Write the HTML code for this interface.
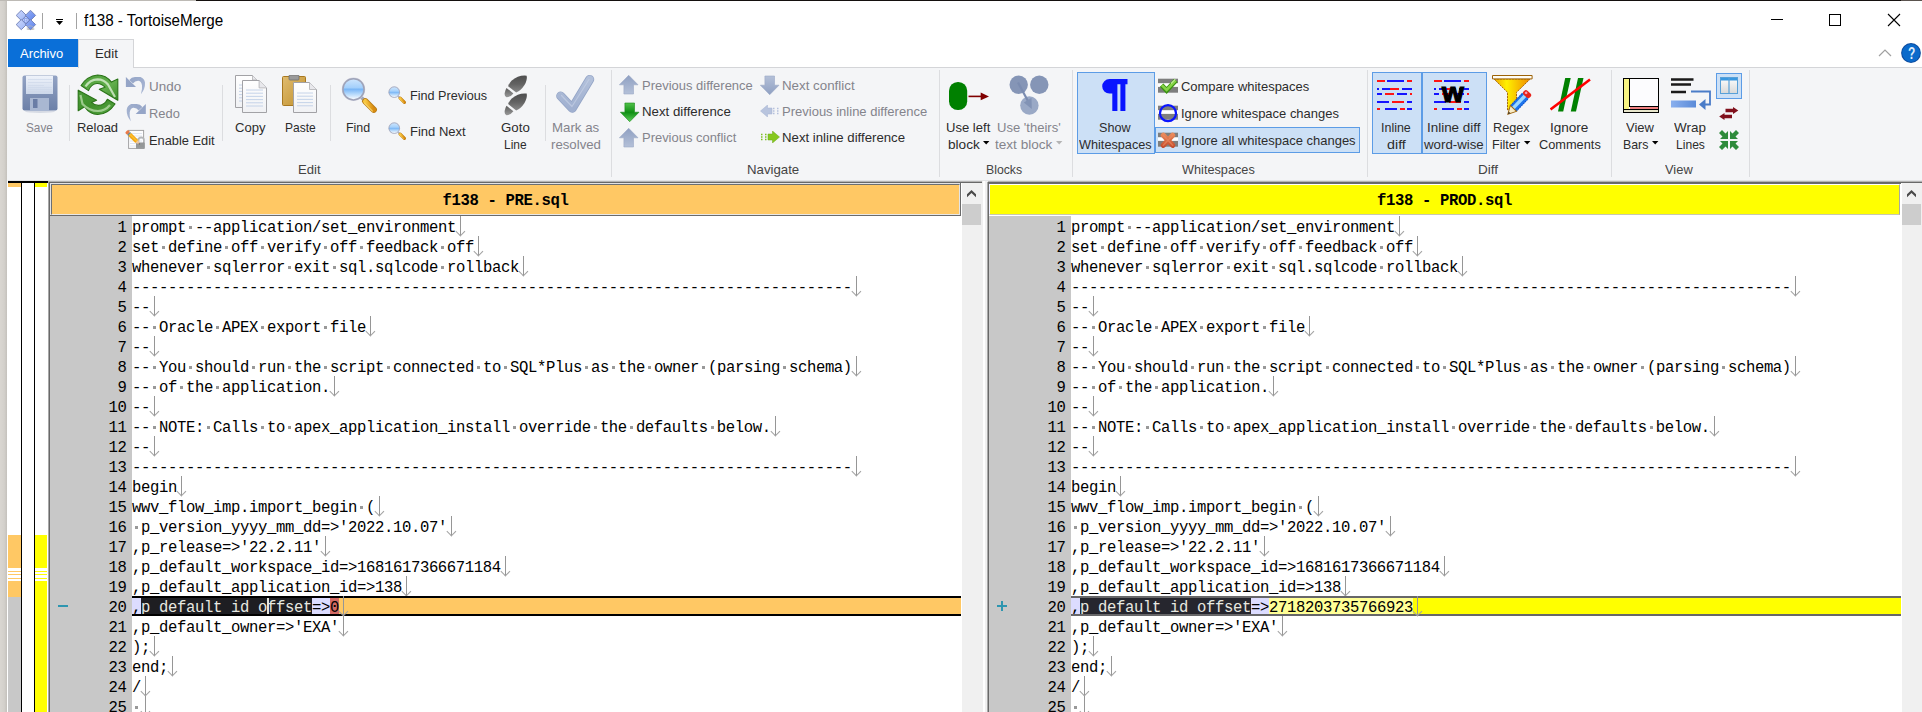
<!DOCTYPE html>
<html lang="es"><head><meta charset="utf-8"><title>f138 - TortoiseMerge</title>
<style>
html,body{margin:0;padding:0;overflow:hidden}
body{width:1922px;height:712px;overflow:hidden;position:relative;background:#fff;font-family:"Liberation Sans",sans-serif}
div,span,i,b,svg{position:absolute;box-sizing:border-box}
.t{white-space:nowrap;line-height:1;transform-origin:0 0;font-family:"Liberation Sans",sans-serif}

.mono{font-family:"Liberation Mono","DejaVu Sans Mono",monospace;font-size:15.6px;letter-spacing:-0.3615px;line-height:20px;white-space:pre;color:#000}
.row{height:20px;left:0;right:0}
.num{width:76.6px;left:0;text-align:right;height:20px;top:2px}
.code{left:82px;height:20px;top:2px}
.code span,.code i,.code b{position:static}
.code .s{background:linear-gradient(#999,#999) 3px 10px/3px 3px no-repeat}
.code i.e{position:relative;display:inline-block;width:9px;height:20px;vertical-align:top;top:-2px}
i.e:before{content:"";position:absolute;left:4px;top:0;width:1px;height:20px;background:#969696}
i.e:after{content:"";position:absolute;left:1.1px;top:12.2px;width:6.8px;height:6.8px;border:solid #a2a2a2;border-width:0 1px 1px 0;transform:rotate(45deg);box-sizing:border-box}
.hdr{font-weight:bold;text-align:center;line-height:32px;height:31px}

.lav{background:#dcdcff}
.sel{background:#1e1e22;color:#e8e8e0}
.sel2{background:#26262e;color:#e8e8e0}
.red{background:#d26a64}
.ly{background:#ffff96}
.row .code b{font-weight:normal;position:relative;top:1.5px}
.row .code span{display:inline-block;height:20px;vertical-align:top;position:relative;top:-2px;line-height:24px}
</style></head>
<body>
<div style="left:0;top:0;width:7px;height:712px;background:linear-gradient(90deg,#d9d6d1,#d3d0cb 60%,#c4c1bc)"></div>
<div style="left:0;top:0;width:1922px;height:1px;background:linear-gradient(90deg,#bdbab5 195.5px,#14100e 196.5px,#14100e 1900.5px,#5a534e 1901.5px)"></div>
<div id="title" style="left:8px;top:2px;width:1914px;height:37px;background:#fff">
<svg style="left:8px;top:8px" width="21" height="21"><linearGradient id="gA1" x1="0" y1="0" x2="1" y2="1"><stop offset="0" stop-color="#ccd8fc"/><stop offset="1" stop-color="#9cb4f6"/></linearGradient><linearGradient id="gA2" x1="0" y1="0" x2="1" y2="1"><stop offset="0" stop-color="#98b0f6"/><stop offset="1" stop-color="#5c82ea"/></linearGradient><ellipse cx="14.500" cy="19" rx="4" ry="1" fill="#9a9a9a" opacity=".6"/><path d="M9.9 5.4l4.6 4.6l-4.6 4.6l-4.6 -4.6z" fill="#8ea6ee" stroke="#6f7fb4" stroke-width=".9" stroke-linejoin="round"/><path d="M5.3 0.3000000000000007l5.1 5.1l-5.1 5.1l-5.1 -5.1z" fill="url(#gA1)" stroke="#6f7fb4" stroke-width=".9" stroke-linejoin="round"/><path d="M14.5 0.3000000000000007l5.1 5.1l-5.1 5.1l-5.1 -5.1z" fill="url(#gA2)" stroke="#6f7fb4" stroke-width=".9" stroke-linejoin="round"/><path d="M5.3 9.5l5.1 5.1l-5.1 5.1l-5.1 -5.1z" fill="url(#gA1)" stroke="#6f7fb4" stroke-width=".9" stroke-linejoin="round"/><path d="M14.5 9.5l5.1 5.1l-5.1 5.1l-5.1 -5.1z" fill="url(#gA2)" stroke="#6f7fb4" stroke-width=".9" stroke-linejoin="round"/><path d="M9.900 7v6M6.900 10h6" stroke="#dfe6fb" stroke-width="1" stroke-dasharray="1 1"/><path d="M11 17.500c1.500-2.200 5-2.200 6.500 0" stroke="#a8b0c4" stroke-width="1.200" fill="none" opacity=".8"/></svg><div style="left:34px;top:11px;width:1px;height:16px;background:#a3a3a3"></div><div style="left:68px;top:11px;width:1px;height:16px;background:#a3a3a3"></div><div style="left:48px;top:17px;width:7px;height:1px;background:#000"></div><svg style="left:48px;top:19px" width="7" height="4"><path d="M0 0h7L3.5 4z" fill="#000"/></svg><span class="t" style="left:75.80px;top:11.06px;font-size:16px;color:#000;transform:scaleX(0.9503);">f138 - TortoiseMerge</span><svg style="left:1762px;top:8px" width="14" height="14" shape-rendering="crispEdges"><path d="M1 9.5h12" stroke="#000" fill="none"/></svg><svg style="left:1820px;top:12px" width="14" height="14" shape-rendering="crispEdges"><rect x="1.5" y="0.5" width="11" height="11" stroke="#000" fill="none"/></svg><svg style="left:1879px;top:11px" width="14" height="14"><path d="M1 1l12 12M13 1L1 13" stroke="#000" stroke-width="1.1" fill="none"/></svg></div>
<div id="tabs" style="left:8px;top:39px;width:1914px;height:29px;background:#fff">
<div style="left:0;top:28px;width:70px;height:1px;background:#f4f5f7"></div><div style="left:0;top:0;width:70px;height:28px;background:#0a6fd8"></div><div style="left:70px;top:0;width:56px;height:29px;background:#f4f5f7;border:1px solid #d4d5d8;border-bottom:0"></div><div style="left:125px;top:28px;width:1789px;height:1px;background:#d4d5d8"></div><span class="t" style="left:12.40px;top:7.91px;font-size:13.1px;color:#fff;transform:scaleX(0.9888);">Archivo</span><span class="t" style="left:86.55px;top:7.91px;font-size:13.1px;color:#2c2c2c;transform:scaleX(1.0112);">Edit</span><svg style="left:1868.5px;top:8.5px" width="16" height="10"><path d="M2 8l6-6 6 6" stroke="#a0a0a0" stroke-width="1.2" fill="none"/></svg><svg style="left:1891.1px;top:2px" width="24" height="24"><circle cx="12" cy="12" r="9.9" fill="#0b4a9e"/><circle cx="12" cy="12" r="8.9" fill="#0a6acb"/></svg><span class="t" style="left:1899.70px;top:7.46px;font-size:16px;color:#dcebfa;transform:scaleX(0.7480);font-weight:bold;">?</span></div>
<div style="left:7px;top:68px;width:1px;height:113px;background:#f4f5f7"></div><div id="ribbon" style="left:8px;top:68px;width:1914px;height:114px;background:#f4f5f7">
<svg width="0" height="0" style="left:0;top:0"><defs><linearGradient id="gDis" x1="0" y1="0" x2="0" y2="1"><stop offset="0" stop-color="#8fa0c2"/><stop offset="1" stop-color="#b4c0d8"/></linearGradient><linearGradient id="gDisH" x1="0" y1="0" x2="1" y2="0"><stop offset="0" stop-color="#8fa0c2"/><stop offset="1" stop-color="#c3cde0"/></linearGradient><linearGradient id="gGrn" x1="0" y1="0" x2="0" y2="1"><stop offset="0" stop-color="#5ed05a"/><stop offset=".5" stop-color="#0f8f14"/><stop offset="1" stop-color="#52c24a"/></linearGradient><linearGradient id="gFlop" x1="0" y1="0" x2="0" y2="1"><stop offset="0" stop-color="#93a3c4"/><stop offset="1" stop-color="#6c80a8"/></linearGradient><linearGradient id="gFlopL" x1="0" y1="0" x2="0" y2="1"><stop offset="0" stop-color="#eef2fa"/><stop offset="1" stop-color="#ccd7ea"/></linearGradient><linearGradient id="gLens" x1="0" y1="0" x2="0" y2="1"><stop offset="0" stop-color="#cfe6fd"/><stop offset=".42" stop-color="#a4d0fb"/><stop offset=".5" stop-color="#7ab6f6"/><stop offset=".72" stop-color="#b4d8fb"/><stop offset="1" stop-color="#ffffff"/></linearGradient><linearGradient id="gHandle" x1="0" y1="0" x2="1" y2="0"><stop offset="0" stop-color="#f8c840"/><stop offset="1" stop-color="#d88a10"/></linearGradient><linearGradient id="gClip" x1="0" y1="0" x2="1" y2="1"><stop offset="0" stop-color="#e0bc70"/><stop offset="1" stop-color="#c0902c"/></linearGradient><linearGradient id="gPaper" x1="0" y1="0" x2="0" y2="1"><stop offset="0" stop-color="#ffffff"/><stop offset="1" stop-color="#f0f1f4"/></linearGradient><linearGradient id="gFoot" x1="0" y1="0" x2="0" y2="1"><stop offset="0" stop-color="#4e4e4e"/><stop offset=".5" stop-color="#626262"/><stop offset="1" stop-color="#8a8a8a"/></linearGradient><linearGradient id="gFoot2" x1="0" y1="0" x2="0" y2="1"><stop offset="0" stop-color="#5c5c5c"/><stop offset="1" stop-color="#9a9a9a"/></linearGradient><linearGradient id="gFun" x1="0" y1="0" x2="1" y2="0"><stop offset="0" stop-color="#f0a800"/><stop offset=".35" stop-color="#fff000"/><stop offset="1" stop-color="#f08c00"/></linearGradient><linearGradient id="gRel1" x1="0" y1="0" x2="1" y2="1"><stop offset="0" stop-color="#4c9e38"/><stop offset=".6" stop-color="#62ae4c"/><stop offset="1" stop-color="#3a8a28"/></linearGradient><linearGradient id="gRel2" x1="0" y1="0" x2="1" y2="1"><stop offset="0" stop-color="#4a9c36"/><stop offset=".5" stop-color="#3f8f2c"/><stop offset="1" stop-color="#57a642"/></linearGradient><linearGradient id="gUndo" x1="0" y1="0" x2="1" y2="1"><stop offset="0" stop-color="#95a5c7"/><stop offset="1" stop-color="#a9b7d4"/></linearGradient><linearGradient id="gX" gradientUnits="userSpaceOnUse" x1="0" y1="3" x2="0" y2="16"><stop offset="0" stop-color="#ea8a5c"/><stop offset="1" stop-color="#c44a2a"/></linearGradient><linearGradient id="gRel" x1="0" y1="0" x2="1" y2="1"><stop offset="0" stop-color="#2e8a1e"/><stop offset=".5" stop-color="#9fd88a"/><stop offset="1" stop-color="#2e8a1e"/></linearGradient><linearGradient id="gBar" x1="0" y1="0" x2="1" y2="0"><stop offset="0" stop-color="#8ab0ee"/><stop offset="1" stop-color="#5a8ad8"/></linearGradient><linearGradient id="gWin" x1="0" y1="0" x2="0" y2="1"><stop offset="0" stop-color="#ffffff"/><stop offset="1" stop-color="#d8d8d8"/></linearGradient><linearGradient id="gChk" x1="0" y1="0" x2="0" y2="1"><stop offset="0" stop-color="#b2c0da"/><stop offset="1" stop-color="#a0b0d0"/></linearGradient></defs></svg><div style="left:1069px;top:4px;width:78px;height:82px;background:#cce0f6;border:1px solid #5c9ce6;"></div><div style="left:1147px;top:59px;width:205px;height:26px;background:#cce0f6;border:1px solid #5c9ce6;"></div><div style="left:1364px;top:4px;width:50px;height:82px;background:#cce0f6;border:1px solid #5c9ce6;"></div><div style="left:1414px;top:4px;width:65px;height:82px;background:#cce0f6;border:1px solid #5c9ce6;"></div><div style="left:1708px;top:5px;width:26px;height:26px;background:#cce0f6;border:1px solid #5c9ce6;"></div><div style="left:61px;top:17px;width:1px;height:56px;background:#dcdde0"></div><div style="left:214px;top:17px;width:1px;height:56px;background:#dcdde0"></div><div style="left:322px;top:17px;width:1px;height:56px;background:#dcdde0"></div><div style="left:537px;top:17px;width:1px;height:56px;background:#dcdde0"></div><div style="left:603px;top:2px;width:1px;height:107px;background:#dcdde0"></div><div style="left:931px;top:2px;width:1px;height:107px;background:#dcdde0"></div><div style="left:1064px;top:2px;width:1px;height:107px;background:#dcdde0"></div><div style="left:1359px;top:2px;width:1px;height:107px;background:#dcdde0"></div><div style="left:1603px;top:2px;width:1px;height:107px;background:#dcdde0"></div><div style="left:1741px;top:2px;width:1px;height:107px;background:#dcdde0"></div><svg style="left:14px;top:7px" width="36" height="38"><ellipse cx="18" cy="36.5" rx="15" ry="1.5" fill="#c9cfdb" opacity=".7"/><rect x="0.5" y="0.5" width="35" height="35" rx="2" fill="url(#gFlop)"/><rect x="4" y="1" width="27" height="18" fill="url(#gFlopL)"/><path d="M6 4.500h24M6 7.500h24M6 10.500h16M6 12.500h24M6 14.500h24M6 17h24" stroke="#cfd8ea" stroke-width=".7"/><rect x="8" y="23" width="19" height="13" fill="#a9b7d2"/><rect x="11" y="24" width="4.5" height="9" fill="#6a7da6"/></svg><span class="t" style="left:17.60px;top:52.91px;font-size:13.1px;color:#84848c;transform:scaleX(0.9006);">Save</span><svg style="left:66px;top:3px" width="48" height="48"><path d="M7.100 14.500Q13 5 23.600 4Q32 4 37.400 11.100L43.800 8V29.300L25.300 18.200L31 16.200Q27.500 12.300 22.900 12.500Q17 13 14.500 19.600Z" fill="url(#gRel1)" stroke="#2a7418" stroke-width="1.100" stroke-linejoin="round"/><path d="M11.500 15.500Q16 8.500 23.500 8.300Q30 8.300 34 13.500L41 26" fill="none" stroke="#e4f4dc" stroke-width="2.200" opacity=".75"/><path d="M4.200 19.200V39.800L10.500 35.700Q16 43.500 23.600 43.500Q34 43.500 41 33L33.400 28.300Q30.500 34.400 24.300 34.400Q20.500 34.400 17.500 31.400L22.600 29.300Z" fill="url(#gRel2)" stroke="#2a7418" stroke-width="1.100" stroke-linejoin="round"/><path d="M6.500 24L8.500 33Q15 40 24 40Q31 40 36 34" fill="none" stroke="#d8f0cc" stroke-width="2.200" opacity=".6"/></svg><span class="t" style="left:68.60px;top:52.91px;font-size:13.1px;color:#2c2c2c;transform:scaleX(0.9897);">Reload</span><svg style="left:114px;top:4px" width="30" height="28"><path d="M3.900 4.900V14.900H14Z" fill="#95a5c7"/><path d="M7.300 8.100Q9.500 5.300 13 5.100H18.500Q22.500 6.500 23 10.800Q23.300 17 18.900 22.200Q20.500 17 20 13.500Q19.500 9.500 16.500 8.800Q13 8.600 11 11.600Z" fill="url(#gUndo)"/></svg><span class="t" style="left:140.60px;top:11.91px;font-size:13.1px;color:#84848c;transform:scaleX(1.0253);">Undo</span><svg style="left:114px;top:31px" width="30" height="28"><g transform="translate(27.700,0) scale(-1,1)"><path d="M3.900 4.900V14.900H14Z" fill="#95a5c7"/><path d="M7.300 8.100Q9.500 5.300 13 5.100H18.500Q22.500 6.500 23 10.800Q23.300 17 18.900 22.200Q20.500 17 20 13.500Q19.500 9.500 16.500 8.800Q13 8.600 11 11.600Z" fill="url(#gUndo)"/></g></svg><span class="t" style="left:140.60px;top:38.91px;font-size:13.1px;color:#84848c;transform:scaleX(0.9837);">Redo</span><svg style="left:114px;top:58px" width="30" height="28"><rect x="6.600" y="4.400" width="15" height="18" fill="#fdfdfe" stroke="#a2a2a4" stroke-width="1"/><path d="M8 7.500h12M8 10h12M8 12.500h12M8 15h12M8 17.500h12M8 20h12" stroke="#dde4f0" stroke-width=".9"/><path d="M16.500 16.500v-2.500a2.700 2.700 0 0 1 5.400 0v2.500" fill="none" stroke="#b4b6b8" stroke-width="1.700"/><rect x="14" y="16.500" width="8.800" height="6.100" fill="#8d9092"/><path d="M14 18h8.800M14 20h8.800M14 21.800h8.800" stroke="#a6a8aa" stroke-width=".6"/><g transform="translate(1,.8) rotate(44.500 4.500 5.500)"><rect x="3" y="3.500" width="3.200" height="4" rx="1" fill="#ec7a46"/><rect x="6" y="3.500" width="1.600" height="4" fill="#6e8a8c"/><rect x="7.600" y="3.500" width="10" height="4" fill="#f4a814"/><rect x="7.600" y="4.600" width="10" height="1.400" fill="#fcc030"/><path d="M17.600 3.500l4 2-4 2z" fill="#eec8a0"/><path d="M20.400 4.900l1.800 .6-1.800 .6z" fill="#444"/></g></svg><span class="t" style="left:140.60px;top:65.91px;font-size:13.1px;color:#2c2c2c;transform:scaleX(0.9790);">Enable Edit</span><svg style="left:227px;top:7px" width="33" height="39"><path d="M0.5 0.5h17.0l4.5 4.5v27.5h-21.5z" fill="url(#gPaper)" stroke="#a2a2a6" stroke-width="1"/><path d="M17.5 0.5v4.5h4.5" fill="#e8e8ec" stroke="#b0b0b4" stroke-width=".8"/><path d="M4 10.0h14.5" stroke="#c0cfe6" stroke-width=".9"/><path d="M4 13.2h14.5" stroke="#c0cfe6" stroke-width=".9"/><path d="M4 16.4h14.5" stroke="#c0cfe6" stroke-width=".9"/><path d="M4 19.6h14.5" stroke="#c0cfe6" stroke-width=".9"/><path d="M4 22.8h14.5" stroke="#c0cfe6" stroke-width=".9"/><path d="M4 26.0h14.5" stroke="#c0cfe6" stroke-width=".9"/><path d="M7.5 5.5h16.6l7.4 7.4v24.6h-24z" fill="url(#gPaper)" stroke="#a2a2a6" stroke-width="1"/><path d="M24.1 5.5v7.4h7.4" fill="#e8e8ec" stroke="#b0b0b4" stroke-width=".8"/><path d="M11 15.0h17" stroke="#c0cfe6" stroke-width=".9"/><path d="M11 18.2h17" stroke="#c0cfe6" stroke-width=".9"/><path d="M11 21.4h17" stroke="#c0cfe6" stroke-width=".9"/><path d="M11 24.6h17" stroke="#c0cfe6" stroke-width=".9"/><path d="M11 27.8h17" stroke="#c0cfe6" stroke-width=".9"/><path d="M11 31.0h17" stroke="#c0cfe6" stroke-width=".9"/></svg><span class="t" style="left:226.70px;top:52.91px;font-size:13.1px;color:#2c2c2c;transform:scaleX(0.9971);">Copy</span><svg style="left:274px;top:7px" width="36" height="39"><rect x=".5" y="1.500" width="23" height="29" rx="1" fill="url(#gClip)" stroke="#a87820" stroke-width="1"/><rect x="7" y="0" width="10" height="5" rx="1" fill="#9a9a9a" stroke="#707070" stroke-width=".8"/><path d="M11.5 7.5h16l7 7v23h-23z" fill="url(#gPaper)" stroke="#a2a2a6" stroke-width="1"/><path d="M27.5 7.5v7h7" fill="#e8e8ec" stroke="#b0b0b4" stroke-width=".8"/><path d="M15 18.0h16" stroke="#c0cfe6" stroke-width=".9"/><path d="M15 21.2h16" stroke="#c0cfe6" stroke-width=".9"/><path d="M15 24.4h16" stroke="#c0cfe6" stroke-width=".9"/><path d="M15 27.6h16" stroke="#c0cfe6" stroke-width=".9"/><path d="M15 30.8h16" stroke="#c0cfe6" stroke-width=".9"/></svg><span class="t" style="left:276.70px;top:52.91px;font-size:13.1px;color:#2c2c2c;transform:scaleX(0.9172);">Paste</span><svg style="left:333px;top:9px" width="37" height="37"><g transform="scale(1.0)"><path d="M20 20l5 5" stroke="#a4a8b8" stroke-width="3.400"/><path d="M24.300 24.300l8.500 8.500" stroke="#b87a14" stroke-width="6.200" stroke-linecap="round"/><path d="M24.300 24.300l8.500 8.500" stroke="url(#gHandle)" stroke-width="4.600" stroke-linecap="round"/><path d="M23.500 26.200l7.800 7.800" stroke="#fbd870" stroke-width="1.200" stroke-linecap="round" opacity=".8"/><circle cx="12.500" cy="12.300" r="11.700" fill="#d4d6e2"/><circle cx="12.500" cy="12.300" r="10.600" fill="url(#gLens)" stroke="#9fa3b8" stroke-width="1.500"/></g></svg><span class="t" style="left:337.70px;top:52.91px;font-size:13.1px;color:#2c2c2c;transform:scaleX(0.9459);">Find</span><svg style="left:380px;top:18px" width="18" height="18"><g transform="scale(0.5)"><path d="M20 20l5 5" stroke="#a4a8b8" stroke-width="3.400"/><path d="M24.300 24.300l8.500 8.500" stroke="#b87a14" stroke-width="6.200" stroke-linecap="round"/><path d="M24.300 24.300l8.500 8.500" stroke="url(#gHandle)" stroke-width="4.600" stroke-linecap="round"/><path d="M23.500 26.200l7.800 7.800" stroke="#fbd870" stroke-width="1.200" stroke-linecap="round" opacity=".8"/><circle cx="12.500" cy="12.300" r="11.700" fill="#d4d6e2"/><circle cx="12.500" cy="12.300" r="10.600" fill="url(#gLens)" stroke="#9fa3b8" stroke-width="1.500"/></g></svg><span class="t" style="left:401.50px;top:20.91px;font-size:13.1px;color:#2c2c2c;transform:scaleX(0.9637);">Find Previous</span><svg style="left:380px;top:54px" width="18" height="18"><g transform="scale(0.5)"><path d="M20 20l5 5" stroke="#a4a8b8" stroke-width="3.400"/><path d="M24.300 24.300l8.500 8.500" stroke="#b87a14" stroke-width="6.200" stroke-linecap="round"/><path d="M24.300 24.300l8.500 8.500" stroke="url(#gHandle)" stroke-width="4.600" stroke-linecap="round"/><path d="M23.500 26.200l7.800 7.800" stroke="#fbd870" stroke-width="1.200" stroke-linecap="round" opacity=".8"/><circle cx="12.500" cy="12.300" r="11.700" fill="#d4d6e2"/><circle cx="12.500" cy="12.300" r="10.600" fill="url(#gLens)" stroke="#9fa3b8" stroke-width="1.500"/></g></svg><span class="t" style="left:401.50px;top:56.91px;font-size:13.1px;color:#2c2c2c;transform:scaleX(0.9934);">Find Next</span><svg style="left:488px;top:2px" width="40" height="48"><g transform="translate(0,0)"><path d="M30.700 5.700Q22.500 4.800 15.500 10.800Q13 13.500 12.100 16.200L20.200 22.600Q25 20.500 28.500 15Q31.500 10 30.700 5.700Z" fill="url(#gFoot)"/><path d="M10.500 17.900L17.400 23.400Q14.800 27 10.500 27.300Q8.200 26.500 8.700 22.900Q9.200 20 10.500 17.900Z" fill="url(#gFoot2)"/></g><g transform="translate(0,17.9)"><path d="M30.700 5.700Q22.500 4.800 15.500 10.800Q13 13.500 12.100 16.200L20.200 22.600Q25 20.500 28.500 15Q31.500 10 30.700 5.700Z" fill="url(#gFoot)"/><path d="M10.500 17.900L17.400 23.400Q14.800 27 10.500 27.300Q8.200 26.500 8.700 22.900Q9.200 20 10.500 17.900Z" fill="url(#gFoot2)"/></g></svg><span class="t" style="left:492.70px;top:52.91px;font-size:13.1px;color:#2c2c2c;transform:scaleX(1.0131);">Goto</span><span class="t" style="left:495.90px;top:69.91px;font-size:13.1px;color:#2c2c2c;transform:scaleX(0.9128);">Line</span><svg style="left:547px;top:6px" width="40" height="40"><path d="M5.700 22L17.200 34.300L34.700 5.400" stroke="#93a4c6" stroke-width="9" stroke-linecap="round" stroke-linejoin="round" fill="none"/><path d="M5.700 22L17.200 34.300L34.700 5.400" stroke="url(#gChk)" stroke-width="7.400" stroke-linecap="round" stroke-linejoin="round" fill="none"/><path d="M6.500 21.500L17 32.500L34 5.500" stroke="#c0cce2" stroke-width="1.200" stroke-linecap="round" stroke-linejoin="round" fill="none" opacity=".8"/></svg><span class="t" style="left:543.60px;top:52.91px;font-size:13.1px;color:#84848c;transform:scaleX(1.0135);">Mark as</span><span class="t" style="left:542.70px;top:69.91px;font-size:13.1px;color:#84848c;transform:scaleX(1.0097);">resolved</span><span class="t" style="left:289.60px;top:94.91px;font-size:13.1px;color:#444444;transform:scaleX(1.0001);">Edit</span><svg style="left:611px;top:7px" width="20" height="20"><path d="M9.700 .3l9.300 9.500h-4.500v9.200h-9.600v-9.200H.4z" fill="url(#gDis)" stroke="#9aa8c6" stroke-width=".6"/></svg><span class="t" style="left:633.60px;top:10.91px;font-size:13.1px;color:#84848c;transform:scaleX(0.9904);">Previous difference</span><svg style="left:611.5px;top:33.6px" width="20" height="20"><g transform="translate(0,20) scale(1,-1)"><path d="M9.700 .3l9.300 9.500h-4.500v9.200h-9.600v-9.200H.4z" fill="url(#gGrn)" stroke="#1a8a1a" stroke-width=".6"/></g></svg><span class="t" style="left:633.60px;top:36.91px;font-size:13.1px;color:#2c2c2c;transform:scaleX(1.0114);">Next difference</span><svg style="left:611.3px;top:59.6px" width="20" height="20"><path d="M9.700 .3l9.300 9.500h-4.500v9.200h-9.600v-9.200H.4z" fill="url(#gDis)" stroke="#9aa8c6" stroke-width=".6"/></svg><span class="t" style="left:633.60px;top:62.91px;font-size:13.1px;color:#84848c;transform:scaleX(0.9888);">Previous conflict</span><svg style="left:752px;top:7px" width="20" height="20"><g transform="translate(0,20) scale(1,-1)"><path d="M9.700 .3l9.300 9.500h-4.500v9.200h-9.600v-9.200H.4z" fill="url(#gDis)" stroke="#9aa8c6" stroke-width=".6"/></g></svg><span class="t" style="left:774.40px;top:10.91px;font-size:13.1px;color:#84848c;transform:scaleX(1.0178);">Next conflict</span><svg style="left:752px;top:37px" width="20" height="12"><path d="M13 3.500h2M17 3.500h2M13 6h2M17 6h2M13 8.500h2M17 8.500h2" stroke="#b4c0dc" stroke-width="1.400" stroke-dasharray="1.500 1"/><path d="M12 3H7.500V0l-7 6 7 6V9H12z" fill="#b8c4de" stroke="#a4b2d0" stroke-width=".5"/></svg><span class="t" style="left:774.40px;top:36.91px;font-size:13.1px;color:#84848c;transform:scaleX(0.9936);">Previous inline difference</span><svg style="left:751.5px;top:63px" width="20" height="12"><path d="M1 3.500h2M5 3.500h2M1 6h2M5 6h2M1 8.500h2M5 8.500h2" stroke="#7cc020" stroke-width="1.400" stroke-dasharray="1.500 1"/><path d="M8 3h4.500V0l7 6-7 6V9H8z" fill="#86c81e" stroke="#6aa818" stroke-width=".5"/></svg><span class="t" style="left:774.40px;top:62.91px;font-size:13.1px;color:#2c2c2c;transform:scaleX(1.0083);">Next inline difference</span><span class="t" style="left:739.40px;top:94.91px;font-size:13.1px;color:#444444;transform:scaleX(1.0101);">Navigate</span><svg style="left:940.9px;top:14px" width="41" height="28"><rect x="0" y="0" width="18.200" height="28" rx="8.800" fill="#008000"/><path d="M19.500 14.400h13.500" stroke="#800000" stroke-width="1.600"/><path d="M31.700 10.600l8.300 3.800-8.300 3.800z" fill="#800000"/></svg><span class="t" style="left:937.70px;top:52.91px;font-size:13.1px;color:#2c2c2c;transform:scaleX(0.9975);">Use left</span><span class="t" style="left:939.60px;top:69.91px;font-size:13.1px;color:#2c2c2c;transform:scaleX(1.0406);">block</span><svg style="left:975px;top:73px" width="7" height="4"><path d="M0 0h6.400L3.200 3.500z" fill="#000"/></svg><svg style="left:1001px;top:7px" width="40" height="40"><circle cx="9.700" cy="9.700" r="9.200" fill="#8595b6"/><circle cx="30.300" cy="9.700" r="9.200" fill="#8595b6"/><circle cx="20.400" cy="30.500" r="9.200" fill="#9aa9c6"/><path d="M9 7.500L19.500 27" stroke="#7b8cb0" stroke-width="2.200"/><path d="M14.800 27.500l8 6.500-.3-11.200z" fill="#8293b5"/></svg><span class="t" style="left:988.50px;top:52.91px;font-size:13.1px;color:#84848c;transform:scaleX(0.9954);">Use &#x27;theirs&#x27;</span><span class="t" style="left:987.20px;top:69.91px;font-size:13.1px;color:#84848c;transform:scaleX(1.0359);">text block</span><svg style="left:1048px;top:73px" width="7" height="4"><path d="M0 0h6.400L3.200 3.500z" fill="#b4b4b4"/></svg><span class="t" style="left:977.60px;top:94.91px;font-size:13.1px;color:#444444;transform:scaleX(0.9357);">Blocks</span><svg style="left:1093.6px;top:11px" width="26" height="32"><path d="M7.500 0H25.500V5.200H23.400V32H18.400V5.200H15.400V32H10.300V14.600H7.500A7.300 7.300 0 0 1 7.500 0Z" fill="#0a14ff"/></svg><span class="t" style="left:1091.40px;top:52.91px;font-size:13.1px;color:#2c2c2c;transform:scaleX(0.9630);">Show</span><span class="t" style="left:1070.80px;top:69.91px;font-size:13.1px;color:#2c2c2c;transform:scaleX(0.9694);">Whitespaces</span><svg style="left:1150px;top:9px" width="20" height="18"><g transform="translate(0,1.700)"><rect x="0" y="0" width="20" height="4.700" fill="#7e7e7e"/><rect x="0" y="4.700" width="20" height="3.500" fill="#fff"/><rect x="0" y="8.200" width="20" height="5.800" fill="#7e7e7e"/></g><path d="M3.600 8.200l5 5.200L17.800 3.300" stroke="#3c9412" stroke-width="4.800" fill="none" stroke-linejoin="miter"/><path d="M3.800 8.200l4.800 4.800L17.600 3.500" stroke="#86d446" stroke-width="2.600" fill="none"/><path d="M13 6.500L17.300 2.200" stroke="#d4f4b4" stroke-width="1.200" fill="none" opacity=".8"/></svg><span class="t" style="left:1172.80px;top:11.91px;font-size:13.1px;color:#2c2c2c;transform:scaleX(0.9898);">Compare whitespaces</span><svg style="left:1150px;top:36px" width="20" height="19"><g transform="translate(0,1.700)"><rect x="0" y="0" width="20" height="4.700" fill="#7e7e7e"/><rect x="0" y="4.700" width="20" height="3.500" fill="#fff"/><rect x="0" y="8.200" width="20" height="5.800" fill="#7e7e7e"/></g><circle cx="10" cy="9.200" r="8" fill="none" stroke="#0a14ff" stroke-width="2.200"/></svg><span class="t" style="left:1172.80px;top:38.91px;font-size:13.1px;color:#2c2c2c;transform:scaleX(0.9906);">Ignore whitespace changes</span><svg style="left:1150px;top:63px" width="20" height="19"><g transform="translate(0,1.700)"><rect x="0" y="0" width="20" height="4.700" fill="#7e7e7e"/><rect x="0" y="4.700" width="20" height="3.500" fill="#fff"/><rect x="0" y="8.200" width="20" height="5.800" fill="#7e7e7e"/></g><path d="M5.300 4.300l9.400 10M14.700 4.300L5.300 14.300" stroke="url(#gX)" stroke-width="5.200" stroke-linecap="round"/><path d="M5.300 4.300l9.400 10M14.700 4.300L5.300 14.300" stroke="#ee9068" stroke-width="1.600" stroke-linecap="round" opacity=".55"/></svg><span class="t" style="left:1172.80px;top:65.91px;font-size:13.1px;color:#2c2c2c;transform:scaleX(0.9911);">Ignore all whitespace changes</span><span class="t" style="left:1173.80px;top:94.91px;font-size:13.1px;color:#444444;transform:scaleX(0.9707);">Whitespaces</span><svg style="left:1369px;top:12px" width="35" height="30" shape-rendering="crispEdges"><rect x="0" y="0" width="7.5" height="2" fill="#ff1414"/><rect x="10" y="0" width="17" height="2" fill="#1414ff"/><rect x="30" y="0" width="5" height="2" fill="#ff1414"/><rect x="0" y="7.5" width="2" height="2" fill="#1414ff"/><rect x="5" y="7.5" width="7.5" height="2" fill="#1414ff"/><rect x="12.5" y="7.5" width="9.5" height="2" fill="#ff1414"/><rect x="25" y="7.5" width="10" height="2" fill="#1414ff"/><rect x="0" y="13" width="5" height="2" fill="#1414ff"/><rect x="7.5" y="13" width="9.5" height="2" fill="#ff1414"/><rect x="20" y="13" width="10" height="2" fill="#1414ff"/><rect x="33" y="13" width="2" height="2" fill="#ff1414"/><rect x="0" y="20.5" width="12" height="2" fill="#1414ff"/><rect x="15" y="20.5" width="12" height="2" fill="#ff1414"/><rect x="30" y="20.5" width="5" height="2" fill="#1414ff"/><rect x="0" y="28" width="2.5" height="2" fill="#ff1414"/><rect x="8" y="28" width="12" height="2" fill="#1414ff"/><rect x="23" y="28" width="4.5" height="2" fill="#ff1414"/><rect x="30" y="28" width="5" height="2" fill="#1414ff"/></svg><span class="t" style="left:1372.50px;top:52.91px;font-size:13.1px;color:#2c2c2c;transform:scaleX(0.9518);">Inline</span><span class="t" style="left:1379.10px;top:69.91px;font-size:13.1px;color:#2c2c2c;transform:scaleX(1.0930);">diff</span><svg style="left:1426px;top:12px" width="35" height="30" shape-rendering="crispEdges"><rect x="0" y="0" width="7.5" height="2" fill="#ff1414"/><rect x="10" y="0" width="17" height="2" fill="#1414ff"/><rect x="30" y="0" width="5" height="2" fill="#ff1414"/><rect x="0" y="7.5" width="2" height="2" fill="#1414ff"/><rect x="5" y="7.5" width="7.5" height="2" fill="#1414ff"/><rect x="12.5" y="7.5" width="9.5" height="2" fill="#ff1414"/><rect x="25" y="7.5" width="10" height="2" fill="#1414ff"/><rect x="0" y="13" width="5" height="2" fill="#1414ff"/><rect x="7.5" y="13" width="9.5" height="2" fill="#ff1414"/><rect x="20" y="13" width="10" height="2" fill="#1414ff"/><rect x="33" y="13" width="2" height="2" fill="#ff1414"/><rect x="0" y="20.5" width="12" height="2" fill="#1414ff"/><rect x="15" y="20.5" width="12" height="2" fill="#ff1414"/><rect x="30" y="20.5" width="5" height="2" fill="#1414ff"/><rect x="0" y="28" width="2.5" height="2" fill="#ff1414"/><rect x="8" y="28" width="12" height="2" fill="#1414ff"/><rect x="23" y="28" width="4.5" height="2" fill="#ff1414"/><rect x="30" y="28" width="5" height="2" fill="#1414ff"/></svg><span class="t" style="left:1434.44px;top:10.60px;font-size:28px;color:#000;transform:scaleX(1.0009);font-weight:bold;-webkit-text-stroke:1.2px #000;">w</span><span class="t" style="left:1418.50px;top:52.91px;font-size:13.1px;color:#2c2c2c;transform:scaleX(1.0248);">Inline diff</span><span class="t" style="left:1415.77px;top:69.91px;font-size:13.1px;color:#2c2c2c;transform:scaleX(1.0133);">word-wise</span><svg style="left:1484px;top:7px" width="42" height="42"><path d="M2 4h36.200L24.500 17.300V30l-9 5V17.300z" fill="url(#gFun)" stroke="#a8680c" stroke-width="1" stroke-dasharray="2.200 .8"/><path d="M.5 .5h39.600v3.400H.5z" fill="#fffdf4" stroke="#9c6208" stroke-width="1"/><g transform="translate(16.200,38.800) rotate(-46.200)"><rect x="7.500" y="-4.300" width="17.500" height="8.600" fill="#1c74ee"/><rect x="7.500" y="-2" width="17.500" height="3.400" fill="#9cd8ff"/><path d="M7.500 -4h17.500M7.500 4h17.500" stroke="#1250c4" stroke-width="1" stroke-dasharray="1.500 1"/><rect x="24.500" y="-4.300" width="5.500" height="8.600" rx="2.200" fill="#e8241c"/><circle cx="27.500" cy="-1.500" r="1.300" fill="#f4a0b8"/><path d="M7.500 -4.300L-.5 0 7.500 4.300z" fill="#f8ecc8" stroke="#a06810" stroke-width="1"/><path d="M2 -1.300L-.5 0l2.500 1.300z" fill="#4a3a20"/></g></svg><span class="t" style="left:1484.50px;top:52.91px;font-size:13.1px;color:#2c2c2c;transform:scaleX(0.9694);">Regex</span><span class="t" style="left:1483.90px;top:69.91px;font-size:13.1px;color:#2c2c2c;transform:scaleX(0.9594);">Filter</span><svg style="left:1516px;top:73px" width="7" height="4"><path d="M0 0h6.400L3.200 3.500z" fill="#000"/></svg><svg style="left:1542px;top:9.5px" width="41" height="34"><path d="M15.200 0h5.500L13.200 33.500H8z" fill="#008000"/><path d="M28 0h5.500L26 33.500h-5.200z" fill="#008000"/><path d="M.5 31.500L40 1.500" stroke="#ff0000" stroke-width="2.600"/></svg><span class="t" style="left:1542.30px;top:52.91px;font-size:13.1px;color:#2c2c2c;transform:scaleX(1.0340);">Ignore</span><span class="t" style="left:1530.90px;top:69.91px;font-size:13.1px;color:#2c2c2c;transform:scaleX(0.9757);">Comments</span><span class="t" style="left:1469.70px;top:94.91px;font-size:13.1px;color:#444444;transform:scaleX(1.0332);">Diff</span><svg style="left:1615px;top:10px" width="36" height="35"><rect x=".5" y=".5" width="35" height="34" fill="#fcfcfe" stroke="#000" stroke-width="1"/><rect x="1" y="1" width="5" height="30" fill="#f8f484"/><path d="M6.500 1v28" stroke="#000" stroke-width="1"/><rect x="7" y="29" width="28" height="2.500" fill="#f08080"/><path d="M6 28.500h29M1 31.500h34" stroke="#000" stroke-width="1"/><rect x="1" y="32" width="34" height="2" fill="#e8e6cc"/></svg><span class="t" style="left:1618.00px;top:52.91px;font-size:13.1px;color:#2c2c2c;transform:scaleX(0.9941);">View</span><span class="t" style="left:1614.60px;top:69.91px;font-size:13.1px;color:#2c2c2c;transform:scaleX(0.9435);">Bars</span><svg style="left:1644px;top:73px" width="7" height="4"><path d="M0 0h6.400L3.200 3.500z" fill="#000"/></svg><svg style="left:1663px;top:9.5px" width="41" height="33"><path d="M0 1.500h22.500M0 6.500h20M0 14h15" stroke="#1a1a1a" stroke-width="2.600"/><rect x="0" y="22.500" width="25" height="7" fill="url(#gBar)"/><path d="M20 13.500h19v13h-9" fill="none" stroke="#4a7cc8" stroke-width="1.800"/><path d="M28 26.500l6.500-5.500v11z" fill="#4a7cc8"/></svg><span class="t" style="left:1665.60px;top:52.91px;font-size:13.1px;color:#2c2c2c;transform:scaleX(1.0275);">Wrap</span><span class="t" style="left:1667.70px;top:69.91px;font-size:13.1px;color:#2c2c2c;transform:scaleX(0.9231);">Lines</span><svg style="left:1712px;top:9px" width="18" height="17"><rect x=".5" y=".5" width="17" height="16" fill="url(#gWin)" stroke="#58a0d8" stroke-width="1"/><rect x="1" y="1" width="16" height="2.500" fill="#3a98e0"/><path d="M9 1v15" stroke="#58a0d8" stroke-width="1.200"/></svg><svg style="left:1711.3px;top:38.5px" width="20" height="13"><path d="M6.500 1.800h7.500V0L19.300 3.500 14 7V5.200H6.500z" fill="#80101c"/><path d="M13 7.800H5.500V6L.2 9.500 5.500 13V11.200H13z" fill="#80101c"/></svg><svg style="left:1711px;top:62px" width="20" height="20"><path d="M0 3l3-3 3.500 3.500L9 1v8H1l2.500-2.500z" fill="#2e8b3c" transform="rotate(0 10 10)"/><path d="M0 3l3-3 3.500 3.500L9 1v8H1l2.500-2.500z" fill="#2e8b3c" transform="rotate(90 10 10)"/><path d="M0 3l3-3 3.500 3.500L9 1v8H1l2.500-2.500z" fill="#2e8b3c" transform="rotate(180 10 10)"/><path d="M0 3l3-3 3.500 3.500L9 1v8H1l2.500-2.500z" fill="#2e8b3c" transform="rotate(270 10 10)"/></svg><span class="t" style="left:1656.50px;top:94.91px;font-size:13.1px;color:#444444;transform:scaleX(0.9835);">View</span></div>
<div style="left:8px;top:180px;width:1914px;height:1px;background:#e2e3e5"></div><div style="left:48px;top:181px;width:1874px;height:1px;background:#b4b4b4"></div><div style="left:48px;top:182px;width:1874px;height:1px;background:#696969"></div><div id="loc" style="left:8px;top:181px;width:40px;height:531px;background:#fff"><div style="left:0;top:0;width:40px;height:2px;background:#000"></div><div style="left:13px;top:2px;width:1px;height:529px;background:#000"></div><div style="left:26px;top:2px;width:1px;height:529px;background:#000"></div><div style="left:0px;top:2px;width:13px;height:4px;background:#ffc864"></div><div style="left:0px;top:354px;width:13px;height:33px;background:#ffc864"></div><div style="left:0px;top:390px;width:13px;height:1px;background:#ffc864"></div><div style="left:0px;top:393px;width:13px;height:1px;background:#ffc864"></div><div style="left:0px;top:397px;width:13px;height:1px;background:#ffc864"></div><div style="left:27px;top:2px;width:12px;height:4px;background:#ffff00"></div><div style="left:27px;top:354px;width:12px;height:33px;background:#ffff00"></div><div style="left:27px;top:390px;width:12px;height:1px;background:#ffff00"></div><div style="left:27px;top:393px;width:12px;height:1px;background:#ffff00"></div><div style="left:27px;top:397px;width:12px;height:1px;background:#ffff00"></div><div style="left:0px;top:400px;width:13px;height:16px;background:#ffc864"></div><div style="left:0px;top:416px;width:13px;height:116px;background:#c8c8c8"></div><div style="left:27px;top:400px;width:12px;height:132px;background:#ffff00"></div></div>
<div style="left:48px;top:182px;width:1px;height:530px;background:#a8a8a8"></div><div style="left:49px;top:182px;width:1px;height:530px;background:#696969"></div><div class="pane mono" id="L" style="left:50px;top:183px;width:911px;height:529px;background:#fff;overflow:hidden">
<div class="hdr" style="left:1px;top:1px;width:909px;background:#ffc864;border:1px solid #6b6f73;border-right-color:#e4e4e4;border-bottom-color:#e8e8e8">f138 - PRE.sql</div><div style="left:0;top:0;width:1px;height:33px;background:#e3e3e3"></div><div style="left:0;top:0;width:911px;height:1px;background:#e3e3e3"></div><div style="left:910px;top:0;width:1px;height:33px;background:#6b6b6b"></div><div style="left:0;top:32px;width:911px;height:1px;background:#6b6b6b"></div><div style="left:0;top:33px;width:82px;height:500px;background:#c8c8c8"></div>
<div class="row" style="top:33px"><div class="num">1</div><div class="code">prompt<span class="s"> </span>--application/set_environment<i class="e"></i></div></div>
<div class="row" style="top:53px"><div class="num">2</div><div class="code">set<span class="s"> </span>define<span class="s"> </span>off<span class="s"> </span>verify<span class="s"> </span>off<span class="s"> </span>feedback<span class="s"> </span>off<i class="e"></i></div></div>
<div class="row" style="top:73px"><div class="num">3</div><div class="code">whenever<span class="s"> </span>sqlerror<span class="s"> </span>exit<span class="s"> </span>sql.sqlcode<span class="s"> </span>rollback<i class="e"></i></div></div>
<div class="row" style="top:93px"><div class="num">4</div><div class="code">--------------------------------------------------------------------------------<i class="e"></i></div></div>
<div class="row" style="top:113px"><div class="num">5</div><div class="code">--<i class="e"></i></div></div>
<div class="row" style="top:133px"><div class="num">6</div><div class="code">--<span class="s"> </span>Oracle<span class="s"> </span>APEX<span class="s"> </span>export<span class="s"> </span>file<i class="e"></i></div></div>
<div class="row" style="top:153px"><div class="num">7</div><div class="code">--<i class="e"></i></div></div>
<div class="row" style="top:173px"><div class="num">8</div><div class="code">--<span class="s"> </span>You<span class="s"> </span>should<span class="s"> </span>run<span class="s"> </span>the<span class="s"> </span>script<span class="s"> </span>connected<span class="s"> </span>to<span class="s"> </span>SQL*Plus<span class="s"> </span>as<span class="s"> </span>the<span class="s"> </span>owner<span class="s"> </span>(parsing<span class="s"> </span>schema)<i class="e"></i></div></div>
<div class="row" style="top:193px"><div class="num">9</div><div class="code">--<span class="s"> </span>of<span class="s"> </span>the<span class="s"> </span>application.<i class="e"></i></div></div>
<div class="row" style="top:213px"><div class="num">10</div><div class="code">--<i class="e"></i></div></div>
<div class="row" style="top:233px"><div class="num">11</div><div class="code">--<span class="s"> </span>NOTE:<span class="s"> </span>Calls<span class="s"> </span>to<span class="s"> </span>apex_application_install<span class="s"> </span>override<span class="s"> </span>the<span class="s"> </span>defaults<span class="s"> </span>below.<i class="e"></i></div></div>
<div class="row" style="top:253px"><div class="num">12</div><div class="code">--<i class="e"></i></div></div>
<div class="row" style="top:273px"><div class="num">13</div><div class="code">--------------------------------------------------------------------------------<i class="e"></i></div></div>
<div class="row" style="top:293px"><div class="num">14</div><div class="code">begin<i class="e"></i></div></div>
<div class="row" style="top:313px"><div class="num">15</div><div class="code">wwv_flow_imp.import_begin<span class="s"> </span>(<i class="e"></i></div></div>
<div class="row" style="top:333px"><div class="num">16</div><div class="code"><span class="s"> </span>p_version_yyyy_mm_dd=&gt;'2022.10.07'<i class="e"></i></div></div>
<div class="row" style="top:353px"><div class="num">17</div><div class="code">,p_release=&gt;'22.2.11'<i class="e"></i></div></div>
<div class="row" style="top:373px"><div class="num">18</div><div class="code">,p_default_workspace_id=&gt;1681617366671184<i class="e"></i></div></div>
<div class="row" style="top:393px"><div class="num">19</div><div class="code">,p_default_application_id=&gt;138<i class="e"></i></div></div>
<div class="row" style="top:413px"><div class="num">20</div><div style="left:82px;top:0;right:0;height:20px;background:#ffc864"></div><div class="code"><span class="lav">,</span><span class="sel">p<b>_</b>default<b>_</b>id<b>_</b>o</span><span class="sel">ffset</span><span class="lav">=&gt;</span><span class="red">0</span></div><div style="left:82px;top:0;right:0;height:2px;background:#000"></div><div style="left:82px;top:18px;right:0;height:2px;background:#000"></div><div class="code" style="left:289px"><i class="e"></i></div><div style="left:217px;top:2px;width:2px;height:16px;background:#e4e4dc"></div><div style="left:8px;top:9px;width:10px;height:2px;background:#2e96b0"></div></div>
<div class="row" style="top:433px"><div class="num">21</div><div class="code">,p_default_owner=&gt;'EXA'<i class="e"></i></div></div>
<div class="row" style="top:453px"><div class="num">22</div><div class="code">);<i class="e"></i></div></div>
<div class="row" style="top:473px"><div class="num">23</div><div class="code">end;<i class="e"></i></div></div>
<div class="row" style="top:493px"><div class="num">24</div><div class="code">/<i class="e"></i></div></div>
<div class="row" style="top:513px"><div class="num">25</div><div class="code"><span class="s"> </span><i class="e"></i></div></div>
</div>
<div style="left:961px;top:183px;width:21px;height:529px;background:linear-gradient(90deg,#fff 1px,#f0f0f0 1px)"><svg style="left:6px;top:6.8px" width="9" height="8"><path d="M0 4.200L4.500 0 9 4.200V7.300L4.500 3.100 0 7.300Z" fill="#4a4a4a"/></svg><div style="left:1px;top:21px;width:19px;height:21px;background:#cdcdcd"></div></div>
<div style="left:982px;top:181px;width:6px;height:531px;background:#f0f0f0"></div><div style="left:983px;top:181px;width:2px;height:531px;background:#fff"></div><div style="left:987px;top:182px;width:1px;height:530px;background:#a8a8a8"></div><div style="left:988px;top:182px;width:1px;height:530px;background:#696969"></div><div class="pane mono" id="R" style="left:989px;top:183px;width:912px;height:529px;background:#fff;overflow:hidden">
<div class="hdr" style="left:0;top:1px;width:911px;background:#ffff00;border:1px solid #fff;border-left-color:#f0f0ff;border-bottom-color:#c8c8b0;border-right-color:#a8a8a0">f138 - PROD.sql</div><div style="left:0;top:0;width:912px;height:1px;background:#6b6b6b"></div><div style="left:0;top:32px;width:912px;height:1px;background:#fff"></div><div style="left:0;top:33px;width:82px;height:500px;background:#c8c8c8"></div>
<div class="row" style="top:33px"><div class="num">1</div><div class="code">prompt<span class="s"> </span>--application/set_environment<i class="e"></i></div></div>
<div class="row" style="top:53px"><div class="num">2</div><div class="code">set<span class="s"> </span>define<span class="s"> </span>off<span class="s"> </span>verify<span class="s"> </span>off<span class="s"> </span>feedback<span class="s"> </span>off<i class="e"></i></div></div>
<div class="row" style="top:73px"><div class="num">3</div><div class="code">whenever<span class="s"> </span>sqlerror<span class="s"> </span>exit<span class="s"> </span>sql.sqlcode<span class="s"> </span>rollback<i class="e"></i></div></div>
<div class="row" style="top:93px"><div class="num">4</div><div class="code">--------------------------------------------------------------------------------<i class="e"></i></div></div>
<div class="row" style="top:113px"><div class="num">5</div><div class="code">--<i class="e"></i></div></div>
<div class="row" style="top:133px"><div class="num">6</div><div class="code">--<span class="s"> </span>Oracle<span class="s"> </span>APEX<span class="s"> </span>export<span class="s"> </span>file<i class="e"></i></div></div>
<div class="row" style="top:153px"><div class="num">7</div><div class="code">--<i class="e"></i></div></div>
<div class="row" style="top:173px"><div class="num">8</div><div class="code">--<span class="s"> </span>You<span class="s"> </span>should<span class="s"> </span>run<span class="s"> </span>the<span class="s"> </span>script<span class="s"> </span>connected<span class="s"> </span>to<span class="s"> </span>SQL*Plus<span class="s"> </span>as<span class="s"> </span>the<span class="s"> </span>owner<span class="s"> </span>(parsing<span class="s"> </span>schema)<i class="e"></i></div></div>
<div class="row" style="top:193px"><div class="num">9</div><div class="code">--<span class="s"> </span>of<span class="s"> </span>the<span class="s"> </span>application.<i class="e"></i></div></div>
<div class="row" style="top:213px"><div class="num">10</div><div class="code">--<i class="e"></i></div></div>
<div class="row" style="top:233px"><div class="num">11</div><div class="code">--<span class="s"> </span>NOTE:<span class="s"> </span>Calls<span class="s"> </span>to<span class="s"> </span>apex_application_install<span class="s"> </span>override<span class="s"> </span>the<span class="s"> </span>defaults<span class="s"> </span>below.<i class="e"></i></div></div>
<div class="row" style="top:253px"><div class="num">12</div><div class="code">--<i class="e"></i></div></div>
<div class="row" style="top:273px"><div class="num">13</div><div class="code">--------------------------------------------------------------------------------<i class="e"></i></div></div>
<div class="row" style="top:293px"><div class="num">14</div><div class="code">begin<i class="e"></i></div></div>
<div class="row" style="top:313px"><div class="num">15</div><div class="code">wwv_flow_imp.import_begin<span class="s"> </span>(<i class="e"></i></div></div>
<div class="row" style="top:333px"><div class="num">16</div><div class="code"><span class="s"> </span>p_version_yyyy_mm_dd=&gt;'2022.10.07'<i class="e"></i></div></div>
<div class="row" style="top:353px"><div class="num">17</div><div class="code">,p_release=&gt;'22.2.11'<i class="e"></i></div></div>
<div class="row" style="top:373px"><div class="num">18</div><div class="code">,p_default_workspace_id=&gt;1681617366671184<i class="e"></i></div></div>
<div class="row" style="top:393px"><div class="num">19</div><div class="code">,p_default_application_id=&gt;138<i class="e"></i></div></div>
<div class="row" style="top:413px"><div class="num">20</div><div style="left:82px;top:0;right:0;height:20px;background:#ffff00"></div><div class="code"><span class="lav">,</span><span class="sel2">p<b>_</b>default<b>_</b>id<b>_</b>offset</span><span class="lav">=&gt;</span><span class="ly">2718203735766923</span></div><div style="left:82px;top:0;right:0;height:2px;background:#676769"></div><div style="left:82px;top:18px;right:0;height:2px;background:#676769"></div><div class="code" style="left:424px"><i class="e"></i></div><div style="left:8px;top:9px;width:10px;height:2px;background:#2e96b0"></div><div style="left:12px;top:5px;width:2px;height:10px;background:#2e96b0"></div></div>
<div class="row" style="top:433px"><div class="num">21</div><div class="code">,p_default_owner=&gt;'EXA'<i class="e"></i></div></div>
<div class="row" style="top:453px"><div class="num">22</div><div class="code">);<i class="e"></i></div></div>
<div class="row" style="top:473px"><div class="num">23</div><div class="code">end;<i class="e"></i></div></div>
<div class="row" style="top:493px"><div class="num">24</div><div class="code">/<i class="e"></i></div></div>
<div class="row" style="top:513px"><div class="num">25</div><div class="code"><span class="s"> </span><i class="e"></i></div></div>
</div>
<div style="left:1901px;top:183px;width:21px;height:529px;background:linear-gradient(90deg,#fff 1px,#f0f0f0 1px)"><svg style="left:6px;top:6.8px" width="9" height="8"><path d="M0 4.200L4.500 0 9 4.200V7.300L4.500 3.100 0 7.300Z" fill="#4a4a4a"/></svg><div style="left:1px;top:21px;width:19px;height:21px;background:#cdcdcd"></div></div>
</body></html>
